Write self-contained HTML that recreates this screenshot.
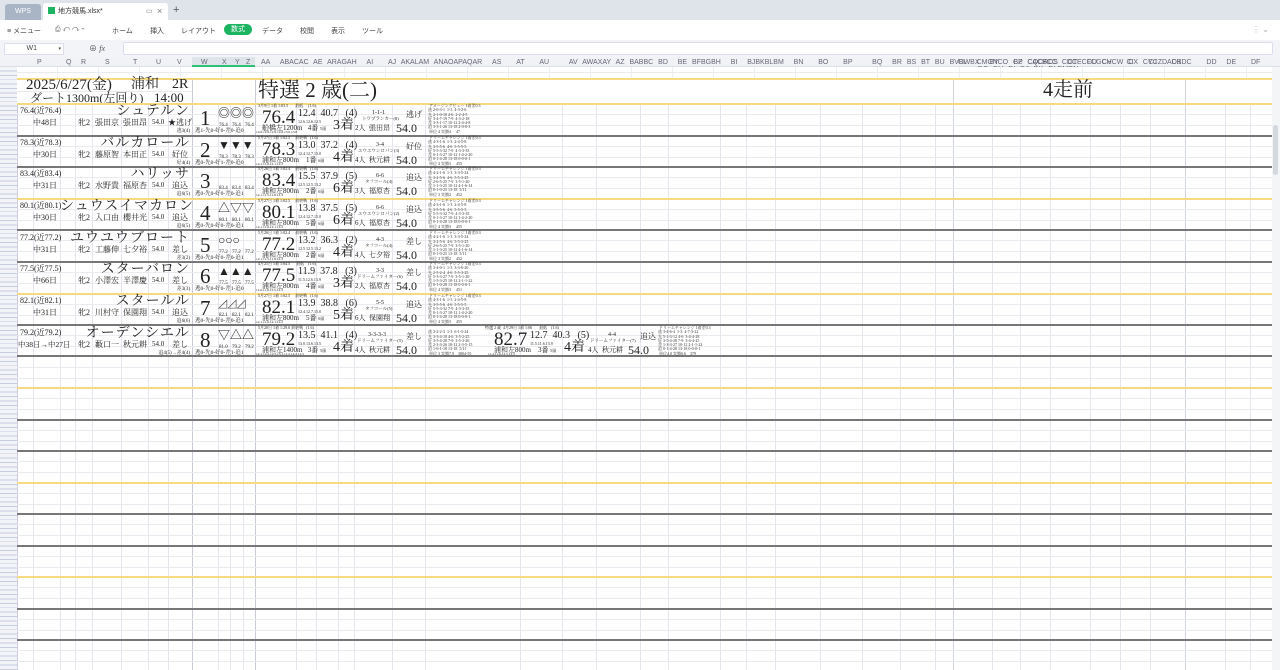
<!DOCTYPE html>
<html><head><meta charset="utf-8">
<style>
*{margin:0;padding:0;box-sizing:border-box}
body{width:1280px;height:670px;overflow:hidden;background:#fff;position:relative;font-family:"Liberation Sans","Noto Sans CJK JP",sans-serif}
.a{position:absolute}
.t{position:absolute;white-space:nowrap;font-family:"Liberation Serif","Noto Serif CJK JP",serif;color:#222;line-height:1}
.s{font-family:"Liberation Sans","Noto Sans CJK JP",sans-serif}
.v{position:absolute;top:67px;bottom:0;width:1px;background:#e3e6ed}
.h{position:absolute;left:17px;right:8px;height:1px;background:#e9ebf0}
.dk{position:absolute;left:17px;right:8px;height:2px;background:#777}
.yl{position:absolute;left:17px;right:8px;height:2px;background:#f6d981}
.b{position:absolute;left:0;width:1280px;height:31px}
.ch{position:absolute;top:59px;font-size:7px;color:#667;font-family:"Liberation Sans",sans-serif}
.mt{position:absolute;left:428px;top:0;width:92px;font-size:4px;line-height:4.3px;color:#333;font-family:"Liberation Serif","Noto Serif CJK JP",serif;white-space:pre}
</style></head><body>
<div class="a" style="left:0;top:0;width:1280px;height:20px;background:#dfe4eb"></div>
<div class="a s" style="left:5px;top:4px;width:36px;height:16px;background:#a9b4c5;border-radius:3px 3px 0 0;color:#fff;font-size:7px;text-align:center;line-height:16px">WPS</div>
<div class="a s" style="left:43px;top:3px;width:125px;height:17px;background:#fff;border-radius:3px 3px 0 0;font-size:7px;line-height:17px;color:#333"><span style="display:inline-block;width:7px;height:7px;background:#1cb460;margin:0 3px 0 5px;vertical-align:-1px"></span>地方競馬.xlsx*<span style="position:absolute;left:103px;color:#888">▭</span><span style="position:absolute;left:114px;color:#777;font-size:9px">×</span></div>
<div class="a s" style="left:173px;top:4px;font-size:11px;color:#555">+</div>
<div class="a" style="left:0;top:20px;width:1280px;height:20px;background:#fff"></div>
<div class="a s" style="left:7px;top:26px;font-size:7px;color:#444">≡ メニュー</div>
<div class="a s" style="left:55px;top:26px;font-size:7px;color:#666">⎙ ↶ ↷ ▿</div>
<div class="a s" style="left:112px;top:26px;font-size:7px;color:#444">ホーム</div>
<div class="a s" style="left:150px;top:26px;font-size:7px;color:#444">挿入</div>
<div class="a s" style="left:181px;top:26px;font-size:7px;color:#444">レイアウト</div>
<div class="a s" style="left:224px;top:24px;width:28px;height:11px;background:#1cb460;border-radius:6px;font-size:7px;color:#fff;text-align:center;line-height:11px">数式</div>
<div class="a s" style="left:262px;top:26px;font-size:7px;color:#444">データ</div>
<div class="a s" style="left:300px;top:26px;font-size:7px;color:#444">校閲</div>
<div class="a s" style="left:331px;top:26px;font-size:7px;color:#444">表示</div>
<div class="a s" style="left:362px;top:26px;font-size:7px;color:#444">ツール</div>
<div class="a s" style="left:1252px;top:25px;font-size:8px;color:#aaa">⋮ ⌄</div>
<div class="a" style="left:0;top:40px;width:1280px;height:17px;background:#f3f4f7"></div>
<div class="a s" style="left:4px;top:43px;width:60px;height:12px;background:#fff;border:1px solid #dde;font-size:7px;color:#444;text-align:center;line-height:10px">W1 <span style="float:right;margin-right:2px;font-size:5px">▾</span></div>
<div class="a s" style="left:89px;top:43px;font-size:8px;color:#555">⊕ <i style="font-family:Liberation Serif">fx</i></div>
<div class="a" style="left:123px;top:42px;width:1150px;height:13px;background:#fff;border:1px solid #dde;border-radius:2px"></div>
<div class="a" style="left:0;top:57px;width:1280px;height:10px;background:#f1f2f5;border-bottom:1px solid #dcdfe6"></div>
<div class="a" style="left:192px;top:57px;width:63px;height:10px;background:#dfe4ea;border-bottom:2px solid #2fbf78"></div>
<div class="ch" style="left:37px">P</div><div class="ch" style="left:66px">Q</div><div class="ch" style="left:81px">R</div><div class="ch" style="left:105px">S</div><div class="ch" style="left:133px">T</div><div class="ch" style="left:156px">U</div><div class="ch" style="left:177px">V</div><div class="ch" style="left:201px">W</div><div class="ch" style="left:222px">X</div><div class="ch" style="left:235px">Y</div><div class="ch" style="left:246px">Z</div>
<div class="ch" style="left:261px;word-spacing:3px">AA &nbsp;ABACAC AE ARAGAH &nbsp;AI &nbsp;&nbsp;AJ AKALAM ANAOAPAQAR &nbsp;AS &nbsp;&nbsp;AT &nbsp;&nbsp;AU &nbsp;&nbsp;&nbsp;AV AWAXAY AZ BABBC BD &nbsp;BE BFBGBH &nbsp;BI &nbsp;BJBKBLBM &nbsp;BN &nbsp;&nbsp;BO &nbsp;&nbsp;BP &nbsp;&nbsp;&nbsp;BQ &nbsp;BR BS BT BU BVBWBX &nbsp;BY &nbsp;&nbsp;BZ CACBCC CDCECFCGCH &nbsp;&nbsp;CI &nbsp;&nbsp;CJ &nbsp;&nbsp;CK</div>
<div class="ch" style="left:958px;word-spacing:3px">CL &nbsp;CMCNCO CP CQCRCS &nbsp;CT &nbsp;CU CVCW CX CYCZDADBDC &nbsp;&nbsp;DD &nbsp;DE &nbsp;&nbsp;DF &nbsp;&nbsp;&nbsp;&nbsp;DG DH DI DJ DK DLDMDN</div>
<div class="a" style="left:0;top:67px;width:17px;height:603px;background:repeating-linear-gradient(#f3f4f7 0 3.5px,#c5cde0 3.5px 4.4px)"></div>
<div class="a" style="left:17px;top:67px;width:1px;height:603px;background:#ccd"></div>
<div class="a" style="left:1272px;top:67px;width:8px;height:603px;background:#f4f5f7"></div>
<div class="a" style="left:1273px;top:125px;width:5px;height:50px;background:#d4d8df;border-radius:3px"></div>
<div class="v" style="left:33px"></div><div class="v" style="left:60px"></div><div class="v" style="left:75px"></div><div class="v" style="left:92px"></div><div class="v" style="left:121px"></div><div class="v" style="left:148px"></div><div class="v" style="left:168px"></div><div class="v" style="left:192px;background:#c8ccd4"></div><div class="v" style="left:218px"></div><div class="v" style="left:230px"></div><div class="v" style="left:243px"></div><div class="v" style="left:255px;background:#c8ccd4"></div><div class="v" style="left:296px"></div><div class="v" style="left:316px"></div><div class="v" style="left:338px"></div><div class="v" style="left:354px"></div><div class="v" style="left:392px"></div><div class="v" style="left:425px"></div><div class="v" style="left:520px"></div><div class="v" style="left:562px"></div><div class="v" style="left:596px"></div><div class="v" style="left:640px"></div><div class="v" style="left:668px"></div><div class="v" style="left:720px"></div><div class="v" style="left:746px"></div><div class="v" style="left:775px"></div><div class="v" style="left:820px"></div><div class="v" style="left:862px"></div><div class="v" style="left:900px"></div><div class="v" style="left:935px"></div><div class="v" style="left:953px;background:#d0d4dc"></div><div class="v" style="left:992px"></div><div class="v" style="left:1020px"></div><div class="v" style="left:1050px"></div><div class="v" style="left:1090px"></div><div class="v" style="left:1120px"></div><div class="v" style="left:1150px"></div><div class="v" style="left:1185px;background:#d0d4dc"></div><div class="v" style="left:1225px"></div><div class="v" style="left:1250px"></div>
<div class="a" style="left:17px;top:67px;width:1255px;height:12px;background:repeating-linear-gradient(90deg,#fff 0 40px,#eceff3 40px 41px)"></div>
<div class="h" style="top:72px"></div>
<div class="yl" style="top:78px"></div>
<div class="a" style="left:17px;top:80px;width:1255px;height:24px;background:#fff"></div>
<div class="a" style="left:192px;top:80px;width:1px;height:24px;background:#c8ccd4"></div>
<div class="a" style="left:255px;top:80px;width:1px;height:24px;background:#c8ccd4"></div>
<div class="a" style="left:953px;top:80px;width:1px;height:24px;background:#d0d4dc"></div>
<div class="a" style="left:1185px;top:80px;width:1px;height:24px;background:#d0d4dc"></div>
<div class="h" style="top:91px;width:175px"></div>
<div class="t" style="left:26px;top:78px;font-size:15px">2025/6/27(金)</div>
<div class="t" style="left:131px;top:78px;font-size:14px">浦和</div>
<div class="t" style="left:172px;top:78px;font-size:14px">2R</div>
<div class="t" style="left:30px;top:92px;font-size:12px">ダート1300m(左回り)</div>
<div class="t" style="left:154px;top:91px;font-size:13px">14:00</div>
<div class="t" style="left:258px;top:80px;font-size:21px">特選 2 歳(二)</div>
<div class="t" style="left:1043px;top:80px;font-size:20px">4走前</div>
<div class="yl" style="top:103px"></div>

<div class="dk" style="top:135px"></div><div class="dk" style="top:166px"></div><div class="yl" style="top:198px"></div><div class="dk" style="top:229px"></div><div class="dk" style="top:261px"></div><div class="yl" style="top:293px"></div><div class="dk" style="top:324px"></div><div class="dk" style="top:355px"></div><div class="yl" style="top:387px"></div><div class="dk" style="top:419px"></div><div class="dk" style="top:450px"></div><div class="yl" style="top:482px"></div><div class="dk" style="top:513px"></div><div class="dk" style="top:545px"></div><div class="yl" style="top:576px"></div><div class="dk" style="top:608px"></div><div class="dk" style="top:639px"></div>
<div class="h" style="top:114px"></div><div class="h" style="top:125px"></div><div class="h" style="top:146px"></div><div class="h" style="top:157px"></div><div class="h" style="top:177px"></div><div class="h" style="top:188px"></div><div class="h" style="top:209px"></div><div class="h" style="top:220px"></div><div class="h" style="top:240px"></div><div class="h" style="top:251px"></div><div class="h" style="top:272px"></div><div class="h" style="top:283px"></div><div class="h" style="top:304px"></div><div class="h" style="top:315px"></div><div class="h" style="top:335px"></div><div class="h" style="top:346px"></div><div class="h" style="top:367px"></div><div class="h" style="top:378px"></div><div class="h" style="top:398px"></div><div class="h" style="top:409px"></div><div class="h" style="top:430px"></div><div class="h" style="top:441px"></div><div class="h" style="top:461px"></div><div class="h" style="top:472px"></div><div class="h" style="top:493px"></div><div class="h" style="top:504px"></div><div class="h" style="top:524px"></div><div class="h" style="top:535px"></div><div class="h" style="top:556px"></div><div class="h" style="top:567px"></div><div class="h" style="top:587px"></div><div class="h" style="top:598px"></div><div class="h" style="top:619px"></div><div class="h" style="top:630px"></div><div class="h" style="top:650px"></div><div class="h" style="top:661px"></div>

<div class="b" style="top:104px">
<div class="t" style="left:20px;top:3px;font-size:8px">76.4(近76.4)</div>
<div class="t" style="left:60px;top:1px;width:130px;text-align:right;font-size:14px;letter-spacing:1px">シュテルン</div>
<div class="t" style="left:33px;top:15px;font-size:8px">中48日</div><div class="t" style="left:78px;top:15px;font-size:8px">牝2</div><div class="t" style="left:95px;top:15px;font-size:8px">張田京</div><div class="t" style="left:123px;top:15px;font-size:8px">張田昂</div><div class="t" style="left:152px;top:15px;font-size:7px">54.0</div><div class="t" style="left:168px;top:15px;font-size:8px">★逃げ</div>
<div class="t" style="left:150px;top:25px;width:40px;text-align:right;font-size:5px">逃3(4)</div>
<div class="t" style="left:200px;top:4px;font-size:21px">1</div>
<div class="t" style="left:218px;top:3px;font-size:12px">◎◎◎</div>
<div class="t" style="left:219px;top:19px;font-size:5px;word-spacing:3px">76.4 76.4 76.4</div>
<div class="t" style="left:195px;top:25px;font-size:5.5px">逃1-先0-好0-差0-追0</div>
<div class="t" style="left:258px;top:0;font-size:4px">3月9日 1着 1:03.5 &nbsp;&nbsp;&nbsp;&nbsp;&nbsp;&nbsp;最低 &nbsp;&nbsp;&nbsp;&nbsp;(1.6)</div>
<div class="t" style="left:262px;top:4px;font-size:19px">76.4</div>
<div class="t" style="left:298px;top:5px;font-size:10px">12.4 &nbsp;40.7 &nbsp;&nbsp;(4)</div>
<div class="t" style="left:298px;top:16px;font-size:4px">12.6.12.6.12.5</div>
<div class="t" style="left:333px;top:15px;font-size:14px">3着</div>
<div class="t" style="left:372px;top:6px;font-size:6px">1-1-1</div>
<div class="t" style="left:362px;top:13px;font-size:4.5px">トワプランカー(8)</div>
<div class="t" style="left:406px;top:7px;font-size:8px">逃げ</div>
<div class="t" style="left:355px;top:21px;font-size:7px">2人 &nbsp;張田昂</div><div class="t" style="left:396px;top:18px;font-size:12px">54.0</div>
<div class="t" style="left:262px;top:21px;font-size:7px">船橋左1200m &nbsp;&nbsp;4番 <span style="font-size:4px">5頭</span></div>
<div class="t" style="left:256px;top:27px;font-size:3.5px">12.6.12.6.12.6.12.6.13.0.13.8</div>
<div class="mt"> アメージングビュー 1着差0.3
逃 2-0-3-1  1-3  4-3-2-6
先 2-1-0-10 4-6  2-2-4-5
好 3-4-7-19 7-9  4-3-2-18
差 3-3-1-17 10-12 2-4-4-8
追 3-3-1-26 13-18 2-0-0-3
 単位 4 実勝4     47</div>
</div>
<div class="b" style="top:136px">
<div class="t" style="left:20px;top:3px;font-size:8px">78.3(近78.3)</div>
<div class="t" style="left:60px;top:1px;width:130px;text-align:right;font-size:14px;letter-spacing:1px">バルカロール</div>
<div class="t" style="left:33px;top:15px;font-size:8px">中30日</div><div class="t" style="left:78px;top:15px;font-size:8px">牝2</div><div class="t" style="left:95px;top:15px;font-size:8px">藤原智</div><div class="t" style="left:123px;top:15px;font-size:8px">本田正</div><div class="t" style="left:152px;top:15px;font-size:7px">54.0</div><div class="t" style="left:172px;top:15px;font-size:8px">好位</div>
<div class="t" style="left:150px;top:25px;width:40px;text-align:right;font-size:5px">好4(4)</div>
<div class="t" style="left:200px;top:4px;font-size:21px">2</div>
<div class="t" style="left:218px;top:3px;font-size:12px">▼▼▼</div>
<div class="t" style="left:219px;top:19px;font-size:5px;word-spacing:3px">78.3 78.3 78.3</div>
<div class="t" style="left:195px;top:25px;font-size:5.5px">逃0-先0-好1-差0-追0</div>
<div class="t" style="left:258px;top:0;font-size:4px">5月27日 1着 1:02.5 &nbsp;&nbsp;&nbsp;&nbsp;最終戦 &nbsp;&nbsp;(1.6)</div>
<div class="t" style="left:262px;top:4px;font-size:19px">78.3</div>
<div class="t" style="left:298px;top:5px;font-size:10px">13.0 &nbsp;37.2 &nbsp;&nbsp;(4)</div>
<div class="t" style="left:298px;top:16px;font-size:4px">12.4.12.7.15.0</div>
<div class="t" style="left:333px;top:15px;font-size:14px">4着</div>
<div class="t" style="left:376px;top:6px;font-size:6px">3-4</div>
<div class="t" style="left:358px;top:13px;font-size:4.5px">ユウユウシロパン(3)</div>
<div class="t" style="left:406px;top:7px;font-size:8px">好位</div>
<div class="t" style="left:355px;top:21px;font-size:7px">4人 &nbsp;秋元耕</div><div class="t" style="left:396px;top:18px;font-size:12px">54.0</div>
<div class="t" style="left:262px;top:21px;font-size:7px">浦和左800m &nbsp;&nbsp;&nbsp;1番 <span style="font-size:4px">6頭</span></div>
<div class="t" style="left:256px;top:27px;font-size:3.5px">12.1.11.6.12.1.12.2</div>
<div class="mt"> ドリームチャレンジ 1着差0.3
逃 4-3-1-6  1-3  2-4-5-8
先 3-5-5-6  4-6  5-5-5-5
好 5-5-3-32 7-9  4-3-3-35
差 0-1-3-27 10-12 1-4-2-20
追 0-1-4-28 13-18 0-0-0-1
 単位 4 実勝3     455</div>
</div>
<div class="b" style="top:167px">
<div class="t" style="left:20px;top:3px;font-size:8px">83.4(近83.4)</div>
<div class="t" style="left:60px;top:1px;width:130px;text-align:right;font-size:14px;letter-spacing:1px">ハリッサ</div>
<div class="t" style="left:33px;top:15px;font-size:8px">中31日</div><div class="t" style="left:78px;top:15px;font-size:8px">牝2</div><div class="t" style="left:95px;top:15px;font-size:8px">水野貴</div><div class="t" style="left:123px;top:15px;font-size:8px">福原杏</div><div class="t" style="left:152px;top:15px;font-size:7px">54.0</div><div class="t" style="left:172px;top:15px;font-size:8px">追込</div>
<div class="t" style="left:150px;top:25px;width:40px;text-align:right;font-size:5px">追6(5)</div>
<div class="t" style="left:200px;top:4px;font-size:21px">3</div>
<div class="t" style="left:219px;top:19px;font-size:5px;word-spacing:3px">83.4 83.4 83.4</div>
<div class="t" style="left:195px;top:25px;font-size:5.5px">逃0-先0-好0-差0-追1</div>
<div class="t" style="left:258px;top:0;font-size:4px">5月26日 1着 1:02.4 &nbsp;&nbsp;&nbsp;&nbsp;最終戦 &nbsp;&nbsp;(1.6)</div>
<div class="t" style="left:262px;top:4px;font-size:19px">83.4</div>
<div class="t" style="left:298px;top:5px;font-size:10px">15.5 &nbsp;37.9 &nbsp;&nbsp;(5)</div>
<div class="t" style="left:298px;top:16px;font-size:4px">12.5.12.5.13.2</div>
<div class="t" style="left:333px;top:15px;font-size:14px">6着</div>
<div class="t" style="left:376px;top:6px;font-size:6px">6-6</div>
<div class="t" style="left:365px;top:13px;font-size:4.5px">タフコール(4)</div>
<div class="t" style="left:406px;top:7px;font-size:8px">追込</div>
<div class="t" style="left:355px;top:21px;font-size:7px">3人 &nbsp;福原杏</div><div class="t" style="left:396px;top:18px;font-size:12px">54.0</div>
<div class="t" style="left:262px;top:21px;font-size:7px">浦和左800m &nbsp;&nbsp;&nbsp;2番 <span style="font-size:4px">6頭</span></div>
<div class="t" style="left:256px;top:27px;font-size:3.5px">12.1.11.5.11.8.12.3</div>
<div class="mt"> ドリームチャレンジ 1着差0.3
逃 4-2-1-6  1-3  3-3-5-24
先 3-2-5-6  4-6  5-5-3-25
好 2-6-5-25 7-9  3-5-1-20
差 1-1-3-25 10-12 4-1-6-14
追 0-1-0-25 13-18  5/11
 単位 3 実勝2     452</div>
</div>
<div class="b" style="top:199px">
<div class="t" style="left:20px;top:3px;font-size:8px">80.1(近80.1)</div>
<div class="t" style="left:60px;top:1px;width:130px;text-align:right;font-size:14px;letter-spacing:1px">シュウスイマカロン</div>
<div class="t" style="left:33px;top:15px;font-size:8px">中30日</div><div class="t" style="left:78px;top:15px;font-size:8px">牝2</div><div class="t" style="left:95px;top:15px;font-size:8px">入口由</div><div class="t" style="left:123px;top:15px;font-size:8px">櫻井光</div><div class="t" style="left:152px;top:15px;font-size:7px">54.0</div><div class="t" style="left:172px;top:15px;font-size:8px">追込</div>
<div class="t" style="left:150px;top:25px;width:40px;text-align:right;font-size:5px">追6(5)</div>
<div class="t" style="left:200px;top:4px;font-size:21px">4</div>
<div class="t" style="left:218px;top:3px;font-size:12px">△▽▽</div>
<div class="t" style="left:219px;top:19px;font-size:5px;word-spacing:3px">80.1 80.1 80.1</div>
<div class="t" style="left:195px;top:25px;font-size:5.5px">逃0-先0-好0-差0-追1</div>
<div class="t" style="left:258px;top:0;font-size:4px">5月27日 1着 1:02.5 &nbsp;&nbsp;&nbsp;&nbsp;最終戦 &nbsp;&nbsp;(1.6)</div>
<div class="t" style="left:262px;top:4px;font-size:19px">80.1</div>
<div class="t" style="left:298px;top:5px;font-size:10px">13.8 &nbsp;37.5 &nbsp;&nbsp;(5)</div>
<div class="t" style="left:298px;top:16px;font-size:4px">12.4.12.7.15.0</div>
<div class="t" style="left:333px;top:15px;font-size:14px">6着</div>
<div class="t" style="left:376px;top:6px;font-size:6px">6-6</div>
<div class="t" style="left:358px;top:13px;font-size:4.5px">ユウユウシロパン(2)</div>
<div class="t" style="left:406px;top:7px;font-size:8px">追込</div>
<div class="t" style="left:355px;top:21px;font-size:7px">6人 &nbsp;福原杏</div><div class="t" style="left:396px;top:18px;font-size:12px">54.0</div>
<div class="t" style="left:262px;top:21px;font-size:7px">浦和左800m &nbsp;&nbsp;&nbsp;5番 <span style="font-size:4px">6頭</span></div>
<div class="t" style="left:256px;top:27px;font-size:3.5px">12.1.11.6.12.1.12.2</div>
<div class="mt"> ドリームチャレンジ 1着差0.3
逃 4-3-1-6  1-3  2-4-5-8
先 3-5-5-6  4-6  5-5-5-5
好 5-5-3-32 7-9  4-3-3-35
差 0-1-3-27 10-12 1-4-2-20
追 0-1-4-28 13-18 0-0-0-1
 単位 4 実勝3     455</div>
</div>
<div class="b" style="top:231px">
<div class="t" style="left:20px;top:3px;font-size:8px">77.2(近77.2)</div>
<div class="t" style="left:60px;top:1px;width:130px;text-align:right;font-size:14px;letter-spacing:1px">ユウユウブロート</div>
<div class="t" style="left:33px;top:15px;font-size:8px">中31日</div><div class="t" style="left:78px;top:15px;font-size:8px">牝2</div><div class="t" style="left:95px;top:15px;font-size:8px">工藤伸</div><div class="t" style="left:123px;top:15px;font-size:8px">七夕裕</div><div class="t" style="left:152px;top:15px;font-size:7px">54.0</div><div class="t" style="left:172px;top:15px;font-size:8px">差し</div>
<div class="t" style="left:150px;top:25px;width:40px;text-align:right;font-size:5px">差3(2)</div>
<div class="t" style="left:200px;top:4px;font-size:21px">5</div>
<div class="t" style="left:218px;top:3px;font-size:12px">○○○</div>
<div class="t" style="left:219px;top:19px;font-size:5px;word-spacing:3px">77.2 77.2 77.2</div>
<div class="t" style="left:195px;top:25px;font-size:5.5px">逃0-先0-好0-差0-追1</div>
<div class="t" style="left:258px;top:0;font-size:4px">5月26日 1着 1:02.4 &nbsp;&nbsp;&nbsp;&nbsp;最終戦 &nbsp;&nbsp;(1.6)</div>
<div class="t" style="left:262px;top:4px;font-size:19px">77.2</div>
<div class="t" style="left:298px;top:5px;font-size:10px">13.2 &nbsp;36.3 &nbsp;&nbsp;(2)</div>
<div class="t" style="left:298px;top:16px;font-size:4px">12.5.12.5.13.2</div>
<div class="t" style="left:333px;top:15px;font-size:14px">4着</div>
<div class="t" style="left:376px;top:6px;font-size:6px">4-3</div>
<div class="t" style="left:365px;top:13px;font-size:4.5px">タフコール(4)</div>
<div class="t" style="left:406px;top:7px;font-size:8px">差し</div>
<div class="t" style="left:355px;top:21px;font-size:7px">4人 &nbsp;七夕裕</div><div class="t" style="left:396px;top:18px;font-size:12px">54.0</div>
<div class="t" style="left:262px;top:21px;font-size:7px">浦和左800m &nbsp;&nbsp;&nbsp;2番 <span style="font-size:4px">6頭</span></div>
<div class="t" style="left:256px;top:27px;font-size:3.5px">12.1.11.5.11.8.12.3</div>
<div class="mt"> ドリームチャレンジ 1着差0.3
逃 4-2-1-6  1-3  3-3-5-24
先 3-2-5-6  4-6  5-5-3-25
好 2-6-5-25 7-9  3-5-1-20
差 1-1-3-25 10-12 4-1-6-14
追 0-1-0-25 13-18  5/11
 単位 3 実勝2     452</div>
</div>
<div class="b" style="top:262px">
<div class="t" style="left:20px;top:3px;font-size:8px">77.5(近77.5)</div>
<div class="t" style="left:60px;top:1px;width:130px;text-align:right;font-size:14px;letter-spacing:1px">スターバロン</div>
<div class="t" style="left:33px;top:15px;font-size:8px">中66日</div><div class="t" style="left:78px;top:15px;font-size:8px">牝2</div><div class="t" style="left:95px;top:15px;font-size:8px">小澤宏</div><div class="t" style="left:123px;top:15px;font-size:8px">半澤慶</div><div class="t" style="left:152px;top:15px;font-size:7px">54.0</div><div class="t" style="left:172px;top:15px;font-size:8px">差し</div>
<div class="t" style="left:150px;top:25px;width:40px;text-align:right;font-size:5px">差3(3)</div>
<div class="t" style="left:200px;top:4px;font-size:21px">6</div>
<div class="t" style="left:218px;top:3px;font-size:12px">▲▲▲</div>
<div class="t" style="left:219px;top:19px;font-size:5px;word-spacing:3px">77.5 77.5 77.5</div>
<div class="t" style="left:195px;top:25px;font-size:5.5px">逃0-先0-好0-差1-追0</div>
<div class="t" style="left:258px;top:0;font-size:4px">4月21日 1着 1:04.5 &nbsp;&nbsp;&nbsp;&nbsp;&nbsp;最低 &nbsp;&nbsp;&nbsp;(1.6)</div>
<div class="t" style="left:262px;top:4px;font-size:19px">77.5</div>
<div class="t" style="left:298px;top:5px;font-size:10px">11.9 &nbsp;37.8 &nbsp;&nbsp;(3)</div>
<div class="t" style="left:298px;top:16px;font-size:4px">11.5.12.6.13.9</div>
<div class="t" style="left:333px;top:15px;font-size:14px">3着</div>
<div class="t" style="left:376px;top:6px;font-size:6px">3-3</div>
<div class="t" style="left:357px;top:13px;font-size:4.5px">ドリームファイター(6)</div>
<div class="t" style="left:406px;top:7px;font-size:8px">差し</div>
<div class="t" style="left:355px;top:21px;font-size:7px">2人 &nbsp;福原杏</div><div class="t" style="left:396px;top:18px;font-size:12px">54.0</div>
<div class="t" style="left:262px;top:21px;font-size:7px">浦和左800m &nbsp;&nbsp;&nbsp;4番 <span style="font-size:4px">6頭</span></div>
<div class="t" style="left:256px;top:27px;font-size:3.5px">11.6.11.6.12.5.12.3</div>
<div class="mt"> ドリームチャレンジ 1着差0.3
逃 3-4-0-1  1-3  3-3-6-20
先 2-5-2-4  4-6  5-5-3-25
好 5-3-3-27 7-9  3-5-1-20
差 1-5-3-25 10-12 2-1-1-22
追 0-1-0-28 13-18 0-0-0-1
 単位 4 実勝3     451</div>
</div>
<div class="b" style="top:294px">
<div class="t" style="left:20px;top:3px;font-size:8px">82.1(近82.1)</div>
<div class="t" style="left:60px;top:1px;width:130px;text-align:right;font-size:14px;letter-spacing:1px">スタールル</div>
<div class="t" style="left:33px;top:15px;font-size:8px">中31日</div><div class="t" style="left:78px;top:15px;font-size:8px">牝2</div><div class="t" style="left:95px;top:15px;font-size:8px">川村守</div><div class="t" style="left:123px;top:15px;font-size:8px">保園翔</div><div class="t" style="left:152px;top:15px;font-size:7px">54.0</div><div class="t" style="left:172px;top:15px;font-size:8px">追込</div>
<div class="t" style="left:150px;top:25px;width:40px;text-align:right;font-size:5px">追6(6)</div>
<div class="t" style="left:200px;top:4px;font-size:21px">7</div>
<div class="t" style="left:218px;top:3px;font-size:12px;color:#555">◿◿◿</div>
<div class="t" style="left:219px;top:19px;font-size:5px;word-spacing:3px">82.1 82.1 82.1</div>
<div class="t" style="left:195px;top:25px;font-size:5.5px">逃0-先0-好0-差0-追1</div>
<div class="t" style="left:258px;top:0;font-size:4px">5月27日 1着 1:02.5 &nbsp;&nbsp;&nbsp;&nbsp;最終戦 &nbsp;&nbsp;(1.6)</div>
<div class="t" style="left:262px;top:4px;font-size:19px">82.1</div>
<div class="t" style="left:298px;top:5px;font-size:10px">13.9 &nbsp;38.8 &nbsp;&nbsp;(6)</div>
<div class="t" style="left:298px;top:16px;font-size:4px">12.4.12.7.15.0</div>
<div class="t" style="left:333px;top:15px;font-size:14px">5着</div>
<div class="t" style="left:376px;top:6px;font-size:6px">5-5</div>
<div class="t" style="left:365px;top:13px;font-size:4.5px">タフコール(5)</div>
<div class="t" style="left:406px;top:7px;font-size:8px">追込</div>
<div class="t" style="left:355px;top:21px;font-size:7px">6人 &nbsp;保園翔</div><div class="t" style="left:396px;top:18px;font-size:12px">54.0</div>
<div class="t" style="left:262px;top:21px;font-size:7px">浦和左800m &nbsp;&nbsp;&nbsp;5番 <span style="font-size:4px">6頭</span></div>
<div class="t" style="left:256px;top:27px;font-size:3.5px">12.1.11.6.12.1.12.2</div>
<div class="mt"> ドリームチャレンジ 1着差0.3
逃 4-3-1-6  1-3  2-4-5-8
先 3-5-5-6  4-6  5-5-5-5
好 5-5-3-32 7-9  4-3-3-35
差 0-1-3-27 10-12 1-4-2-20
追 0-1-4-28 13-18 0-0-0-1
 単位 4 実勝3     455</div>
</div>
<div class="b" style="top:326px">
<div class="t" style="left:20px;top:3px;font-size:8px">79.2(近79.2)</div>
<div class="t" style="left:60px;top:1px;width:130px;text-align:right;font-size:14px;letter-spacing:1px">オーデンシエル</div>
<div class="t" style="left:18px;top:15px;font-size:7.5px">中38日→中27日</div><div class="t" style="left:78px;top:15px;font-size:8px">牝2</div><div class="t" style="left:95px;top:15px;font-size:8px">藪口一</div><div class="t" style="left:123px;top:15px;font-size:8px">秋元耕</div><div class="t" style="left:152px;top:15px;font-size:7px">54.0</div><div class="t" style="left:172px;top:15px;font-size:8px">差し</div>
<div class="t" style="left:130px;top:25px;width:60px;text-align:right;font-size:5px">追4(5)→差4(4)</div>
<div class="t" style="left:200px;top:4px;font-size:21px">8</div>
<div class="t" style="left:218px;top:3px;font-size:12px">▽△△</div>
<div class="t" style="left:219px;top:19px;font-size:5px;word-spacing:3px">81.0 79.2 79.2</div>
<div class="t" style="left:195px;top:25px;font-size:5.5px">逃0-先0-好0-差1-追1</div>
<div class="t" style="left:258px;top:0;font-size:4px">5月20日 1着 1:29.0 最終戦 &nbsp;&nbsp;(1.6)</div>
<div class="t" style="left:262px;top:4px;font-size:19px">79.2</div>
<div class="t" style="left:298px;top:5px;font-size:10px">13.5 &nbsp;41.1 &nbsp;&nbsp;(4)</div>
<div class="t" style="left:298px;top:16px;font-size:4px">13.0.13.6.13.5</div>
<div class="t" style="left:333px;top:15px;font-size:14px">4着</div>
<div class="t" style="left:368px;top:6px;font-size:6px">3-3-3-3</div>
<div class="t" style="left:357px;top:13px;font-size:4.5px">ドリームファイター(5)</div>
<div class="t" style="left:406px;top:7px;font-size:8px">差し</div>
<div class="t" style="left:355px;top:21px;font-size:7px">4人 &nbsp;秋元耕</div><div class="t" style="left:396px;top:18px;font-size:12px">54.0</div>
<div class="t" style="left:262px;top:21px;font-size:7px">浦和左1400m &nbsp;&nbsp;3番 <span style="font-size:4px">5頭</span></div>
<div class="t" style="left:256px;top:27px;font-size:3.5px">12.1.12.2.12.5.13.1.11.2.14.2.12.5</div>
<div class="mt"> 
逃 3-2-2-3  1-3  6-1-5-24
先 3-3-4-10 4-6  3-5-2-25
好 3-5-4-28 7-9  3-5-3-26
差 2-3-3-26 10-12 2-3-5-15
追 1-6-1-18 13-18  5/11
 単位 3 実勝7.9    3804-55</div>
<div class="t" style="left:485px;top:0;font-size:4px">特選 2 歳</div>
<div class="t" style="left:503px;top:0;font-size:4px">4月29日 1着 1:06 &nbsp;&nbsp;&nbsp;&nbsp;&nbsp;&nbsp;最低 &nbsp;&nbsp;&nbsp;(1.6)</div>
<div class="t" style="left:494px;top:4px;font-size:19px">82.7</div>
<div class="t" style="left:530px;top:5px;font-size:10px">12.7 &nbsp;40.3 &nbsp;&nbsp;(5)</div>
<div class="t" style="left:530px;top:16px;font-size:4px">11.5.11.6.13.9</div>
<div class="t" style="left:564px;top:15px;font-size:14px">4着</div>
<div class="t" style="left:608px;top:6px;font-size:6px">4-4</div>
<div class="t" style="left:590px;top:13px;font-size:4.5px">ドリームファイター(7)</div>
<div class="t" style="left:640px;top:7px;font-size:8px">追込</div>
<div class="t" style="left:588px;top:21px;font-size:7px">4人 &nbsp;秋元耕</div><div class="t" style="left:628px;top:18px;font-size:12px">54.0</div>
<div class="t" style="left:494px;top:21px;font-size:7px">浦和左800m &nbsp;&nbsp;&nbsp;3番 <span style="font-size:4px">5頭</span></div>
<div class="t" style="left:488px;top:27px;font-size:3.5px">11.4.11.6.12.5.12.5</div>
<div class="mt" style="left:658px"> ドリームチャレンジ 1着差0.3
逃 3-4-6-4  1-3  4-7-3-22
先 5-1-3-12 4-6  3-4-4-28
好 3-5-4-28 7-9  3-4-4-25
差 1-3-3-27 10-12 2-1-1-22
追 0-1-4-28 13-18 0-0-0-1
 単位4.0 実勝6.6    379</div>
</div>
</body></html>
